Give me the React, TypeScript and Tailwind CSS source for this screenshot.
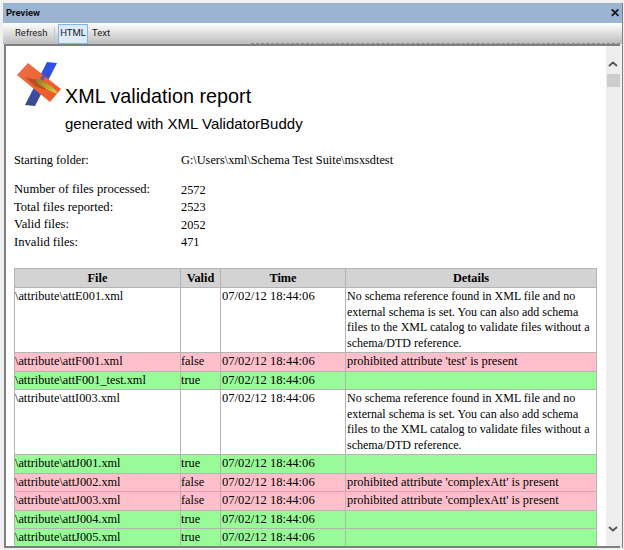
const summary = [
  ['Number of files processed:', '2572'],
  ['Total files reported:', '2523'],
  ['Valid files:', '2052'],
  ['Invalid files:', '471'],
];

const noRef =
  'No schema reference found in XML file and no external schema is set. You can also add schema files to the XML catalog to validate files without a schema/DTD reference.';

const rows: { file: string; valid: string; details: string; color: string }[] = [
  { file: '\\attribute\\attE001.xml', valid: '', details: noRef, color: 'bg-white' },
  { file: '\\attribute\\attF001.xml', valid: 'false', details: "prohibited attribute 'test' is present", color: 'bg-[#ffc0cb]' },
  { file: '\\attribute\\attF001_test.xml', valid: 'true', details: '', color: 'bg-[#98fb98]' },
  { file: '\\attribute\\attI003.xml', valid: '', details: noRef, color: 'bg-white' },
  { file: '\\attribute\\attJ001.xml', valid: 'true', details: '', color: 'bg-[#98fb98]' },
  { file: '\\attribute\\attJ002.xml', valid: 'false', details: "prohibited attribute 'complexAtt' is present", color: 'bg-[#ffc0cb]' },
  { file: '\\attribute\\attJ003.xml', valid: 'false', details: "prohibited attribute 'complexAtt' is present", color: 'bg-[#ffc0cb]' },
  { file: '\\attribute\\attJ004.xml', valid: 'true', details: '', color: 'bg-[#98fb98]' },
  { file: '\\attribute\\attJ005.xml', valid: 'true', details: '', color: 'bg-[#98fb98]' },
];

function Logo() {
  return (
    <svg width="48" height="48" viewBox="0 0 48 48" className="shrink-0">
      <defs>
        <linearGradient id="blueBar" x1="0.8" y1="0" x2="0.2" y2="1">
          <stop offset="0" stopColor="#2f50f0" />
          <stop offset="0.5" stopColor="#3a50c0" />
          <stop offset="1" stopColor="#3a4a88" />
        </linearGradient>
        <linearGradient id="orangeBar" x1="0" y1="0" x2="1" y2="1">
          <stop offset="0" stopColor="#e8704a" />
          <stop offset="0.6" stopColor="#f0602c" />
          <stop offset="1" stopColor="#e85a30" />
        </linearGradient>
        <linearGradient id="yellowBlade" x1="0" y1="0" x2="1" y2="0">
          <stop offset="0" stopColor="#8a7a20" />
          <stop offset="1" stopColor="#d8d040" />
        </linearGradient>
      </defs>
      <polygon points="32,2 42,3 20,46 10,45" fill="url(#blueBar)" />
      <polygon points="2,15 13,3 46,29 35,42" fill="url(#orangeBar)" />
      <polygon points="10,17 30,22 30,30 20,26" fill="#a8481c" opacity="0.75" />
      <ellipse cx="31" cy="26" rx="13" ry="2.5" transform="rotate(32 31 26)" fill="url(#yellowBlade)" />
      <polygon points="29,12 33,12 28,21 25,19" fill="#3a50c8" opacity="0.7" />
    </svg>
  );
}

export default function App() {
  return (
    <div className="w-[624px] h-[550px] overflow-hidden bg-[#f0f0f0] pl-[3px] pr-[1px] pt-[3px] pb-[2px] flex font-['Liberation_Serif',serif] text-[12.3px] text-black">
      <div className="flex-1 min-w-0 flex flex-col border-r border-[#808080]">
        <div className="h-[20px] shrink-0 bg-[#9ab4d2] flex items-center justify-between pl-[3px] pr-[2px] font-['Roboto',sans-serif] text-[9.5px] font-bold text-[#111]">
          <span>Preview</span>
          <span className="text-[12px] leading-none">✕</span>
        </div>
        <div className="relative h-[21px] shrink-0 flex items-center bg-gradient-to-b from-white to-[#bdbdbd] font-['Roboto',sans-serif] text-[9.5px] text-[#222]">
          <span className="pl-[12px] w-[51px]">Refresh</span>
          <span className="w-[1px] h-[14px] bg-[#c8c8c8] mr-[3px]" />
          <span className="h-[20px] w-[30px] flex items-center justify-center bg-[#dcebfa] border border-[#7fb5e6]">HTML</span>
          <span className="pl-[4px]">Text</span>
          <div className="absolute left-[248px] right-[2px] bottom-0 border-b border-dashed border-[#8a8a8a]" />
        </div>
        <div className="flex-1 min-h-0 ml-[1px] mr-[2px] flex border-t-2 border-l-2 border-b-2 border-[#808080] bg-white">
          <div className="flex-1 min-w-0 overflow-hidden pl-[8px] pt-[14px]">
            <div className="flex items-start pl-[1px]">
              <Logo />
              <div className="pl-[2px] pt-[24px] font-['Liberation_Sans',sans-serif]">
                <div className="text-[19.8px] leading-[24px]">XML validation report</div>
                <div className="text-[15px] leading-[17px] mt-[7px]">generated with XML ValidatorBuddy</div>
              </div>
            </div>
            <div className="flex mt-[19px] h-[18px] items-center">
              <span className="w-[167px]">Starting folder:</span>
              <span>G:\Users\xml\Schema Test Suite\msxsdtest</span>
            </div>
            <div className="mt-[12px]">
              {summary.map(([label, value]) => (
                <div key={label} className="flex h-[17.5px] items-center">
                  <span className="w-[167px] text-[12.6px]">{label}</span>
                  <span>{value}</span>
                </div>
              ))}
            </div>
            <table className="mt-[17px] w-[582px] table-fixed border-collapse">
              <colgroup>
                <col className="w-[166px]" />
                <col className="w-[40px]" />
                <col className="w-[125px]" />
                <col className="w-[251px]" />
              </colgroup>
              <thead>
                <tr className="bg-[#d3d3d3] h-[19px]">
                  {['File', 'Valid', 'Time', 'Details'].map((h) => (
                    <th key={h} className="border border-[#b4b4b4] font-bold leading-[16px] py-0 text-center">
                      {h}
                    </th>
                  ))}
                </tr>
              </thead>
              <tbody>
                {rows.map((r, i) => (
                  <tr key={i} className={r.color}>
                    <td className="border border-[#b4b4b4] pl-0 pr-[1px] py-[1px] align-top leading-[15.5px] whitespace-nowrap">{r.file}</td>
                    <td className="border border-[#b4b4b4] pl-0 pr-[1px] py-[1px] align-top leading-[15.5px]">{r.valid}</td>
                    <td className="border border-[#b4b4b4] px-[1px] py-[1px] align-top text-[12.6px] leading-[15.5px] whitespace-nowrap">07/02/12 18:44:06</td>
                    <td className={`border border-[#b4b4b4] px-[1px] py-[1px] align-top leading-[15.5px] ${r.details === noRef ? 'text-[12px]' : 'text-[12.4px]'}`}>{r.details}</td>
                  </tr>
                ))}
              </tbody>
            </table>
          </div>
          <div className="w-[14px] shrink-0 bg-[#eeeeee] flex flex-col items-center pt-[15px] pb-[14px]">
            <svg width="10" height="6" viewBox="0 0 10 6">
              <path d="M1 5 L5 1.5 L9 5" fill="none" stroke="#555" strokeWidth="1.8" />
            </svg>
            <div className="w-[13px] h-[13px] mt-[7px] bg-[#cdcdcd]" />
            <div className="flex-1" />
            <svg width="10" height="6" viewBox="0 0 10 6">
              <path d="M1 1 L5 4.5 L9 1" fill="none" stroke="#555" strokeWidth="1.8" />
            </svg>
          </div>
        </div>
      </div>
    </div>
  );
}
